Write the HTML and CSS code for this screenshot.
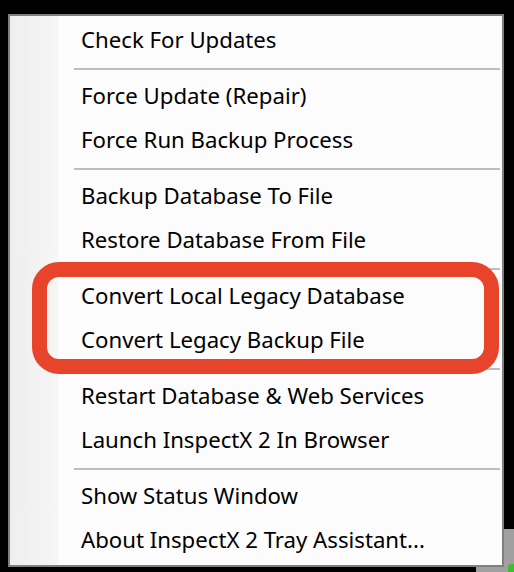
FILE: index.html
```html
<!DOCTYPE html>
<html>
<head>
<meta charset="utf-8">
<link rel="stylesheet" href="styles.css">
</head>
<body>
<div class="screen">
  <div class="menu">
    <div class="item">Check For Updates</div>
    <div class="sep"></div>
    <div class="item">Force Update (Repair)</div>
    <div class="item">Force Run Backup Process</div>
    <div class="sep"></div>
    <div class="item">Backup Database To File</div>
    <div class="item">Restore Database From File</div>
    <div class="sep"></div>
    <div class="item">Convert Local Legacy Database</div>
    <div class="item">Convert Legacy Backup File</div>
    <div class="sep"></div>
    <div class="item">Restart Database &amp; Web Services</div>
    <div class="item">Launch InspectX 2 In Browser</div>
    <div class="sep"></div>
    <div class="item">Show Status Window</div>
    <div class="item">About InspectX 2 Tray Assistant...</div>
  </div>
  <div class="highlight"></div>
  <div class="task-edge"></div>
  <div class="task-bottom"></div>
  <div class="task-icon"></div>
</div>
</body>
</html>
```
FILE: styles.css
```css
html, body {
  margin: 0;
  padding: 0;
  background: #000;
}
.screen {
  position: relative;
  width: 514px;
  height: 572px;
  overflow: hidden;
  background: #000;
  padding-top: 14px;
  box-sizing: border-box;
}
.menu {
  position: relative;
  z-index: 2;
  margin-left: 8px;
  width: 496px;
  height: 553px;
  box-sizing: border-box;
  border: 2px solid #808080;
  padding-top: 2px;
  background: linear-gradient(to right, #eeeeee 0, #f6f6f6 48px, #fcfcfc 48px);
  font-family: "Noto Sans", "Open Sans", sans-serif;
  font-size: 22.2px;
  color: #000;
}
.item {
  height: 44px;
  line-height: 44px;
  padding-left: 71px;
  white-space: nowrap;
}
.sep {
  height: 12px;
  position: relative;
}
.sep::after {
  content: "";
  position: absolute;
  left: 64px;
  right: 2px;
  top: 6px;
  height: 2px;
  background: #bdbdbd;
}
.highlight {
  position: absolute;
  z-index: 3;
  left: 32px;
  top: 262px;
  width: 467px;
  height: 112px;
  box-sizing: border-box;
  border: 15px solid #e8442b;
  border-radius: 27px;
}
.task-edge {
  position: absolute;
  z-index: 1;
  left: 504px;
  top: 529px;
  width: 10px;
  height: 43px;
  background: #a0a0a0;
}
.task-bottom {
  position: absolute;
  z-index: 1;
  left: 476px;
  top: 560px;
  width: 38px;
  height: 12px;
  background: #a0a0a0;
}
.task-icon {
  position: absolute;
  z-index: 3;
  left: 508px;
  top: 564px;
  width: 8px;
  height: 10px;
  border-radius: 3px;
  background: #3fbf2f;
}
```
